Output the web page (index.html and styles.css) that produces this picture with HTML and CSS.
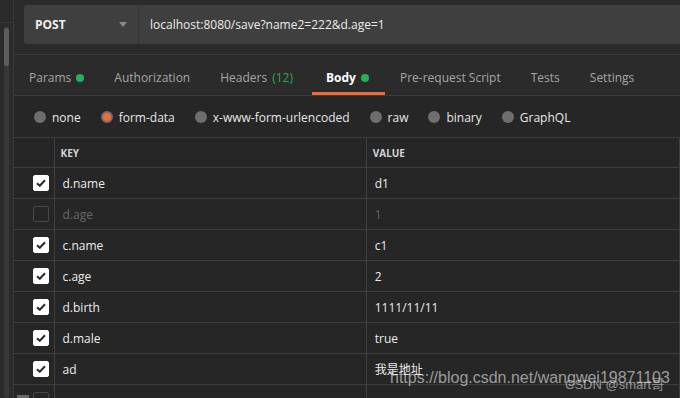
FILE: index.html
```html
<!DOCTYPE html>
<html lang="zh">
<head>
    <meta charset="UTF-8">
    <title>POST localhost:8080/save</title>
    <link rel="stylesheet" href="styles.css">
</head>
<body>
    <div class="sidebar">
        <div class="sidebar-top"></div>
        <div class="scroll-track"><div class="scroll-thumb"></div></div>
    </div>

    <div class="main">
        <div class="request-bar">
            <div class="url-box">
                <div class="method">
                    <span>POST</span>
                    <span class="caret"></span>
                </div>
                <div class="url">localhost:8080/save?name2=222&amp;d.age=1</div>
            </div>
        </div>

        <div class="tabs">
            <div class="tab">Params <span class="dot"></span></div>
            <div class="tab">Authorization</div>
            <div class="tab headers">Headers <span class="count">(12)</span></div>
            <div class="tab active">Body <span class="dot"></span></div>
            <div class="tab">Pre-request Script</div>
            <div class="tab">Tests</div>
            <div class="tab">Settings</div>
        </div>

        <div class="body-types">
            <label class="radio"><span class="circle"></span>none</label>
            <label class="radio"><span class="circle checked"></span>form-data</label>
            <label class="radio"><span class="circle"></span>x-www-form-urlencoded</label>
            <label class="radio"><span class="circle"></span>raw</label>
            <label class="radio"><span class="circle"></span>binary</label>
            <label class="radio"><span class="circle"></span>GraphQL</label>
        </div>

        <table class="params">
            <colgroup>
                <col class="col-check">
                <col class="col-key">
                <col class="col-value">
            </colgroup>
            <thead>
                <tr>
                    <th></th>
                    <th>KEY</th>
                    <th>VALUE</th>
                </tr>
            </thead>
            <tbody id="rows"></tbody>
        </table>

        <div class="watermark">
            <span class="wm-url">https://blog.csdn.net/wangwei19871103</span>
            <span class="wm-csdn">CSDN @smart哥</span>
        </div>
    </div>

    <script>
        // form-data rows
        const rows = [
            { key: 'd.name', value: 'd1', on: true },
            { key: 'd.age', value: '1', on: false },
            { key: 'c.name', value: 'c1', on: true },
            { key: 'c.age', value: '2', on: true },
            { key: 'd.birth', value: '1111/11/11', on: true },
            { key: 'd.male', value: 'true', on: true },
            { key: 'ad', value: '我是地址', on: true }
        ];

        const checkSvg = '<svg width="10" height="8" viewBox="0 0 10 8"><path d="M1 4.2 L3.8 6.8 L9 1.2" fill="none" stroke="#2b2b2b" stroke-width="2"/></svg>';

        const tbody = document.getElementById('rows');
        rows.forEach(r => {
            const tr = document.createElement('tr');
            if (!r.on) tr.className = 'disabled';
            tr.innerHTML =
                '<td class="check-cell"><span class="checkbox' + (r.on ? ' on' : '') + '">' + (r.on ? checkSvg : '') + '</span></td>' +
                '<td>' + r.key + '</td>' +
                '<td>' + r.value + '</td>';
            tbody.appendChild(tr);
        });

        // empty row for a new param
        const blank = document.createElement('tr');
        blank.className = 'blank';
        blank.innerHTML = '<td class="check-cell"><span class="handle"></span><span class="checkbox"></span></td><td></td><td></td>';
        tbody.appendChild(blank);
    </script>
</body>
</html>
```

FILE: styles.css
```css
body {
    margin: 0;
    width: 680px;
    height: 398px;
    overflow: hidden;
    display: flex;
    background-color: #262626;
    font-family: 'Open Sans', 'Noto Sans CJK SC', sans-serif;
    font-size: 12px;
    color: #e8e8e8;
}

.sidebar {
    width: 13px;
    flex-shrink: 0;
    background-color: #2b2b2b;
    border-right: 1px solid #3a3a3a;
    display: flex;
    flex-direction: column;
}

.sidebar-top {
    height: 22px;
    border-bottom: 1px solid #383838;
}

.scroll-track {
    flex: 1;
    margin: 3px 0 0 4px;
    width: 5px;
    background-color: #383838;
    border-radius: 3px;
}

.scroll-thumb {
    height: 38px;
    margin-top: 2px;
    background-color: #5e5e5e;
    border-radius: 3px;
}

.main {
    flex: 1;
    min-width: 0;
    height: 398px;
    overflow: hidden;
    position: relative;
}

/* request line */
.request-bar {
    height: 49px;
    padding: 5px 0 0 10px;
    background-color: #2b2b2b;
    border-bottom: 1px solid #3a3a3a;
}

.url-box {
    display: flex;
    height: 39px;
    background-color: #3f3f3f;
    border-radius: 3px 0 0 3px;
}

.method {
    width: 115px;
    box-sizing: border-box;
    padding: 0 11px 0 11px;
    display: flex;
    align-items: center;
    justify-content: space-between;
    border-right: 1px solid #363636;
    font-weight: 700;
    color: #f0f0f0;
}

.caret {
    width: 0;
    height: 0;
    border-left: 4px solid transparent;
    border-right: 4px solid transparent;
    border-top: 5px solid #8a8a8a;
}

.url {
    padding-left: 11px;
    display: flex;
    align-items: center;
    color: #ececec;
}

/* tabs */
.tabs {
    height: 40px;
    display: flex;
    background-color: #2b2b2b;
    border-bottom: 1px solid #3c3c3c;
}

.tab {
    padding: 8px 15px 0;
    display: flex;
    align-items: center;
    gap: 5px;
    color: #a6a6a6;
    border-bottom: 3px solid transparent;
}

.tab.headers {
    padding-right: 19px;
}

.tab.active {
    color: #ffffff;
    font-weight: 700;
    padding-left: 14px;
    padding-right: 16px;
    border-bottom-color: #f26b3a;
}

.dot {
    width: 8px;
    height: 8px;
    border-radius: 50%;
    background-color: #26b05a;
}

.count {
    color: #2fa356;
}

/* body types */
.body-types {
    height: 41px;
    padding-left: 20px;
    display: flex;
    align-items: center;
    gap: 20px;
    background-color: #262626;
}

.radio {
    display: flex;
    align-items: center;
    gap: 6px;
    padding-top: 1px;
    color: #e6e6e6;
}

.circle {
    width: 12px;
    height: 12px;
    border-radius: 50%;
    background-color: #6e6e6e;
    box-sizing: border-box;
}

.circle.checked {
    border: 2px solid #707070;
    background-color: #f26b3a;
}

/* params table */
.params {
    border-collapse: collapse;
    table-layout: fixed;
    width: 666px;
}

.col-check {
    width: 40px;
}

.col-key {
    width: 312px;
}

.col-value {
    width: 313px;
}

.params th,
.params td {
    height: 30px;
    padding: 0 8px;
    border: 1px solid #3f3f3f;
    text-align: left;
    white-space: nowrap;
}

.params th {
    height: 29px;
    padding-left: 6px;
    font-size: 10px;
    font-weight: 700;
    color: #d4d4d4;
}

.params tr > :first-child {
    border-left: none;
}

.params td {
    color: #ececec;
}

.params td.check-cell {
    padding: 0 0 0 19px;
}

.checkbox {
    display: block;
    width: 16px;
    height: 16px;
    box-sizing: border-box;
    border: 1px solid #474747;
    border-radius: 2px;
}

.checkbox.on {
    display: flex;
    align-items: center;
    justify-content: center;
    background-color: #ffffff;
    border-color: #ffffff;
}

.disabled td {
    color: #666666;
}

.blank td.check-cell {
    vertical-align: top;
    padding-top: 7px;
    position: relative;
}

.handle {
    position: absolute;
    left: 3px;
    top: 10px;
    width: 12px;
    height: 4px;
    background-color: #6a6a6a;
}

/* csdn watermark */
.watermark {
    position: absolute;
    left: 376px;
    top: 369px;
    font-family: 'Liberation Sans', Arial, 'Noto Sans CJK SC', sans-serif;
    white-space: nowrap;
    pointer-events: none;
}

.wm-url {
    font-size: 16px;
    color: rgba(255, 255, 255, 0.55);
}

.wm-csdn {
    position: absolute;
    left: 175px;
    top: 5px;
    font-size: 13px;
    color: rgba(255, 255, 255, 0.5);
}
```
